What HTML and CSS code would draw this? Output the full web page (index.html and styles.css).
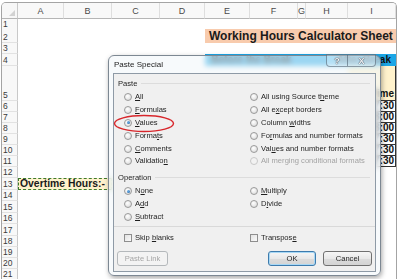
FILE: index.html
```html
<!DOCTYPE html>
<html>
<head>
<meta charset="utf-8">
<link rel="stylesheet" href="styles.css">
</head>
<body>
<div class="window">
  <div class="sheet">
    <div class="row hdr">
      <div class="corner"><i class="tri"></i></div>
      <div class="ch">A</div><div class="ch">B</div><div class="ch">C</div><div class="ch">D</div><div class="ch">E</div><div class="ch">F</div><div class="ch">G</div><div class="ch">H</div><div class="ch">I</div>
    </div>
    <div class="row h10"><div class="rh">1</div></div>
    <div class="row h14"><div class="rh">2</div><div class="title">Working Hours Calculator Sheet</div></div>
    <div class="row h11"><div class="rh">3</div></div>
    <div class="row h12"><div class="rh">4</div><div class="band b1">Before the Break</div><div class="band b2">After Break</div></div>
    <div class="row h35"><div class="rh">5</div><div class="icell head">Out Time</div></div>
    <div class="row h11"><div class="rh">6</div><div class="icell">17:30</div></div>
    <div class="row h11"><div class="rh">7</div><div class="icell">18:00</div></div>
    <div class="row h11"><div class="rh">8</div><div class="icell">18:00</div></div>
    <div class="row h11"><div class="rh">9</div><div class="icell">17:30</div></div>
    <div class="row h11"><div class="rh">10</div><div class="icell">17:30</div></div>
    <div class="row h11"><div class="rh">11</div><div class="icell">17:30</div></div>
    <div class="row h11"><div class="rh">12</div></div>
    <div class="row h12"><div class="rh">13</div><div class="overtime">Overtime Hours:-</div></div>
    <div class="row h11"><div class="rh">14</div></div>
    <div class="row h12"><div class="rh">15</div></div>
    <div class="row h11"><div class="rh">16</div></div>
    <div class="row h12"><div class="rh">17</div></div>
    <div class="row h11"><div class="rh">18</div></div>
    <div class="row h11"><div class="rh">19</div></div>
    <div class="row h11"><div class="rh">20</div></div>
    <div class="row h11"><div class="rh">21</div></div>
  </div>

  <div class="dialog">
    <div class="titlebar">
      <span class="dtitle">Paste Special</span>
      <div class="caps"><span class="cap help">?</span><span class="cap close">X</span></div>
    </div>
    <div class="client">
      <div class="group"><span>Paste</span><i class="gline"></i></div>
      <div class="opts">
        <div class="opt"><i class="radio"></i><span><u>A</u>ll</span></div>
        <div class="opt"><i class="radio"></i><span>All using Source t<u>h</u>eme</span></div>
        <div class="opt"><i class="radio"></i><span><u>F</u>ormulas</span></div>
        <div class="opt"><i class="radio"></i><span>All e<u>x</u>cept borders</span></div>
        <div class="opt"><i class="radio on"></i><span><u>V</u>alues</span></div>
        <div class="opt"><i class="radio"></i><span>Column <u>w</u>idths</span></div>
        <div class="opt"><i class="radio"></i><span>Forma<u>t</u>s</span></div>
        <div class="opt"><i class="radio"></i><span>Fo<u>r</u>mulas and number formats</span></div>
        <div class="opt"><i class="radio"></i><span><u>C</u>omments</span></div>
        <div class="opt"><i class="radio"></i><span>Val<u>u</u>es and number formats</span></div>
        <div class="opt"><i class="radio"></i><span>Validatio<u>n</u></span></div>
        <div class="opt disabled"><i class="radio"></i><span>All merging conditional formats</span></div>
      </div>
      <div class="group op"><span>Operation</span><i class="gline"></i></div>
      <div class="opts">
        <div class="opt"><i class="radio on"></i><span>N<u>o</u>ne</span></div>
        <div class="opt"><i class="radio"></i><span><u>M</u>ultiply</span></div>
        <div class="opt"><i class="radio"></i><span>A<u>d</u>d</span></div>
        <div class="opt"><i class="radio"></i><span>D<u>i</u>vide</span></div>
        <div class="opt"><i class="radio"></i><span><u>S</u>ubtract</span></div>
      </div>
      <div class="sep"></div>
      <div class="opts checks">
        <div class="opt"><i class="check"></i><span>Skip <u>b</u>lanks</span></div>
        <div class="opt"><i class="check"></i><span>Transpos<u>e</u></span></div>
      </div>
      <div class="buttons">
        <span class="btn dis">Paste Link</span>
        <span class="spacer"></span>
        <span class="btn def">OK</span>
        <span class="btn">Cancel</span>
      </div>
    </div>
  </div>

  <svg class="ring" width="62" height="19" viewBox="0 0 62 19"><ellipse cx="31" cy="9.5" rx="29.5" ry="8" fill="none" stroke="#d8262b" stroke-width="1.4"/></svg>
</div>
</body>
</html>
```

FILE: styles.css
```css
* { box-sizing: border-box; margin: 0; padding: 0; }
html, body { width: 400px; height: 279px; overflow: hidden; background: #fff; }
body { font-family: "Liberation Sans", Arial, sans-serif; color: #222; }

.window {
  position: relative;
  margin: 2px 0 0 1px;
  width: 396px;
  height: 281px;
  border: 1px solid #a4a4a4;
  border-bottom: none;
  border-radius: 5px 5px 0 0;
  overflow: hidden;
}

.sheet { display: flex; flex-direction: column; }
.row {
  display: grid;
  grid-template-columns: 16px 46px 48px 48px 45px 45px 48px 8px 42px 48px;
}
.hdr { height: 16px; }
.h10 { height: 10px; }
.h11 { height: 11px; }
.h12 { height: 12px; }
.h14 { height: 14px; }
.h35 { height: 35px; }

.corner {
  background: #f7f7f7;
  border-right: 1px solid #c9c9c9;
  border-bottom: 1px solid #b5b5b5;
  position: relative;
}
.tri {
  position: absolute; right: 2px; bottom: 2px;
  width: 0; height: 0;
  border-left: 6px solid transparent;
  border-bottom: 6px solid #d2d2d2;
}
.ch {
  background: #f8f8f8;
  border-right: 1px solid #dedede;
  border-bottom: 1px solid #b5b5b5;
  font-size: 9px;
  color: #4a4a4a;
  text-align: center;
  line-height: 16px;
  overflow: hidden;
}
.rh {
  grid-column: 1;
  background: #f8f8f8;
  border-right: 1px solid #c9c9c9;
  border-bottom: 1px solid #e2e2e2;
  font-size: 8.5px;
  color: #3a3a3a;
  display: flex;
  align-items: flex-end;
  padding: 0 0 0 1px;
  line-height: 10px;
}

.title {
  grid-column: 6 / 11;
  background: #f8cbad;
  font-weight: bold;
  font-size: 12px;
  line-height: 14px;
  padding-left: 4px;
  white-space: nowrap;
  color: #1a1a1a;
}
.band {
  background: #1ba6e6;
  font-weight: bold;
  font-size: 10px;
  line-height: 12px;
  color: #111;
  white-space: nowrap;
  overflow: hidden;
}
.b1 { grid-column: 6 / 8; text-align: center; }
.b2 { grid-column: 8 / 11; text-align: right; padding-right: 5px; }

.icell {
  grid-column: 10;
  font-size: 10px;
  font-weight: bold;
  white-space: nowrap;
  overflow: hidden;
  padding-right: 1px;
  line-height: 10px;
  border-right: 1px solid #333;
  border-bottom: 1px solid #333;
  display: flex;
  align-items: flex-end;
  justify-content: flex-end;
  color: #111;
}
.icell.head { background: #fff2cc; padding-bottom: 1px; }

.overtime {
  grid-column: 2 / 4;
  background: #fff2cc;
  border: 1px dashed #3c7a2c;
  font-weight: bold;
  font-size: 10.4px;
  line-height: 10px;
  padding-left: 1px;
  color: #1a1a1a;
  white-space: nowrap;
}

/* Dialog */
.dialog {
  position: absolute;
  left: 106px;
  top: 52px;
  width: 273px;
  height: 221px;
  border: 1px solid #7d8893;
  border-radius: 6px;
  background: rgba(242, 246, 250, 0.6);
  backdrop-filter: blur(2.5px);
  box-shadow: 1px 2px 5px rgba(0, 0, 0, 0.35);
  display: flex;
  flex-direction: column;
  padding: 0 4px 3px 4px;
}
.titlebar {
  height: 17px;
  display: flex;
  align-items: flex-start;
  justify-content: space-between;
}
.dtitle {
  font-size: 8px;
  line-height: 17px;
  padding-left: 1px;
  color: #1c1c1c;
}
.caps {
  display: flex;
  margin-top: -2px;
  margin-right: 0;
  height: 13px;
}
.cap {
  height: 13px;
  border: 1px solid rgba(70, 85, 100, 0.55);
  background: rgba(255, 255, 255, 0.22);
  font-size: 9px;
  font-weight: bold;
  line-height: 12px;
  text-align: center;
  color: #f4f6f8;
  text-shadow: 0 0 1px #2a3440, 0 0 1px #2a3440;
}
.help { width: 22px; border-radius: 0 0 0 4px; }
.close { width: 28px; border-left: none; border-radius: 0 0 4px 0; }

.client {
  flex: 1;
  background: #f0f0f0;
  border: 1px solid #8e9aa6;
  display: flex;
  flex-direction: column;
  padding: 0 3px 0 3px;
  font-size: 7.6px;
  color: #1e1e1e;
}
.group {
  display: flex;
  align-items: center;
  height: 13px;
  margin-top: 3px;
  padding-left: 1px;
}
.group.op { margin-top: 3px; }
.gline { flex: 1; height: 1px; background: #dcdcdc; margin-left: 4px; margin-right: 2px; }

.opts {
  display: grid;
  grid-template-columns: 126px 1fr;
  grid-auto-rows: 12.8px;
  padding-left: 7px;
  margin-top: 1px;
}
.opt { display: flex; align-items: center; white-space: nowrap; }
.opt span { margin-left: 3px; line-height: 10px; }
.opt.disabled { color: #a3a3a3; }
.radio {
  width: 8px; height: 8px;
  border-radius: 50%;
  border: 1px solid #9a9a9a;
  background: radial-gradient(circle at 40% 35%, #ffffff 0%, #e6e6e6 60%, #cfcfcf 100%);
  position: relative;
  flex: none;
}
.radio.on::after {
  content: "";
  position: absolute;
  left: 1.5px; top: 1.5px;
  width: 3px; height: 3px;
  border-radius: 50%;
  background: radial-gradient(circle at 35% 35%, #6fb2e8, #1b5fa6);
}
.opt.disabled .radio { border-color: #c8c8c8; background: #f2f2f2; }

.sep { height: 1px; background: #d9d9d9; margin: 3px -3px 0 -3px; }
.checks { margin-top: 4px; }
.check {
  width: 8px; height: 8px;
  border: 1px solid #8e8e8e;
  background: linear-gradient(135deg, #e2e2e2, #fafafa);
  flex: none;
}

.buttons {
  display: flex;
  margin-top: 7px;
  gap: 7px;
}
.spacer { flex: 1; }
.btn {
  height: 15px;
  width: 49px;
  border: 1px solid #707070;
  border-radius: 3px;
  background: linear-gradient(#f6f6f6, #e8e8e8 50%, #dcdcdc 51%, #d4d4d4);
  text-align: center;
  line-height: 13px;
  font-size: 7.6px;
  color: #1e1e1e;
}
.btn.dis { width: 51px; border-color: #b4b8bb; background: #f3f3f3; color: #a5a5a5; margin-left: 0; }
.btn.def { width: 48px; border-color: #3d7bad; box-shadow: inset 0 0 0 1px #a8d8f5; }

.ring { position: absolute; left: 111px; top: 111px; }
```
